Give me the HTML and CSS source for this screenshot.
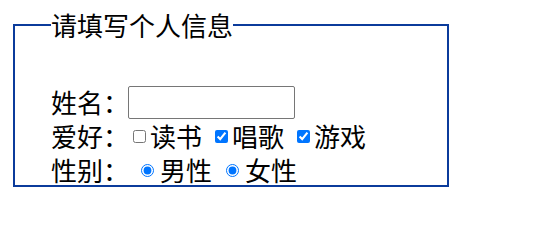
FILE: index.html
```html
<!DOCTYPE html>
<html lang="zh-CN">
<head>
<meta charset="utf-8">
<title>个人信息</title>
<link rel="stylesheet" href="styles.css">
</head>
<body>
<form class="form">
  <fieldset class="info">
    <legend class="info-title">请填写个人信息</legend>
    <div class="rows">
      <div class="row">
        <span class="label">姓名：</span><input class="text-input" type="text">
      </div>
      <div class="row">
        <span class="label">爱好：</span>
        <label class="choice first-check"><input class="check" type="checkbox">读书</label>
        <label class="choice next-check"><input class="check" type="checkbox" checked>唱歌</label>
        <label class="choice next-check"><input class="check" type="checkbox" checked>游戏</label>
      </div>
      <div class="row">
        <span class="label">性别：</span>
        <label class="choice first-radio"><input class="radio" type="radio" name="g1" checked>男性</label>
        <label class="choice next-radio"><input class="radio" type="radio" name="g2" checked>女性</label>
      </div>
    </div>
  </fieldset>
</form>
</body>
</html>
```
FILE: styles.css
```css
body {
  margin: 8px;
  font-family: "Noto Sans CJK SC", "Microsoft YaHei", sans-serif;
  font-size: 26px;
  color: #000;
  background: #fff;
}

.form {
  margin: 0;
}

.info {
  box-sizing: border-box;
  width: 436px;
  margin: 2px 0 0 5px;
  padding: 47px 0 0 36px;
  border: 2px solid #0b3b9b;
}

.info-title {
  padding: 0;
  line-height: 30px;
}

.rows {
  display: flex;
  flex-direction: column;
  gap: 4px;
}

.row {
  display: flex;
  align-items: center;
  height: 30px;
  line-height: 30px;
}

.label {
  white-space: nowrap;
}

.text-input {
  box-sizing: border-box;
  width: 167px;
  height: 33px;
  margin: 0 0 0 -1px;
  border: 1px solid #767676;
  border-radius: 2px;
  padding: 1px 2px;
  font-size: 13px;
}

.choice {
  display: flex;
  align-items: center;
  white-space: nowrap;
}

.check,
.radio {
  width: 13px;
  height: 13px;
  margin: 0;
}

.check {
  margin-right: 4px;
}

.radio {
  margin-right: 6px;
}

.first-check {
  margin-left: 4px;
}

.next-check {
  margin-left: 13px;
}

.first-radio {
  margin-left: 12px;
}

.next-radio {
  margin-left: 14px;
}
```
